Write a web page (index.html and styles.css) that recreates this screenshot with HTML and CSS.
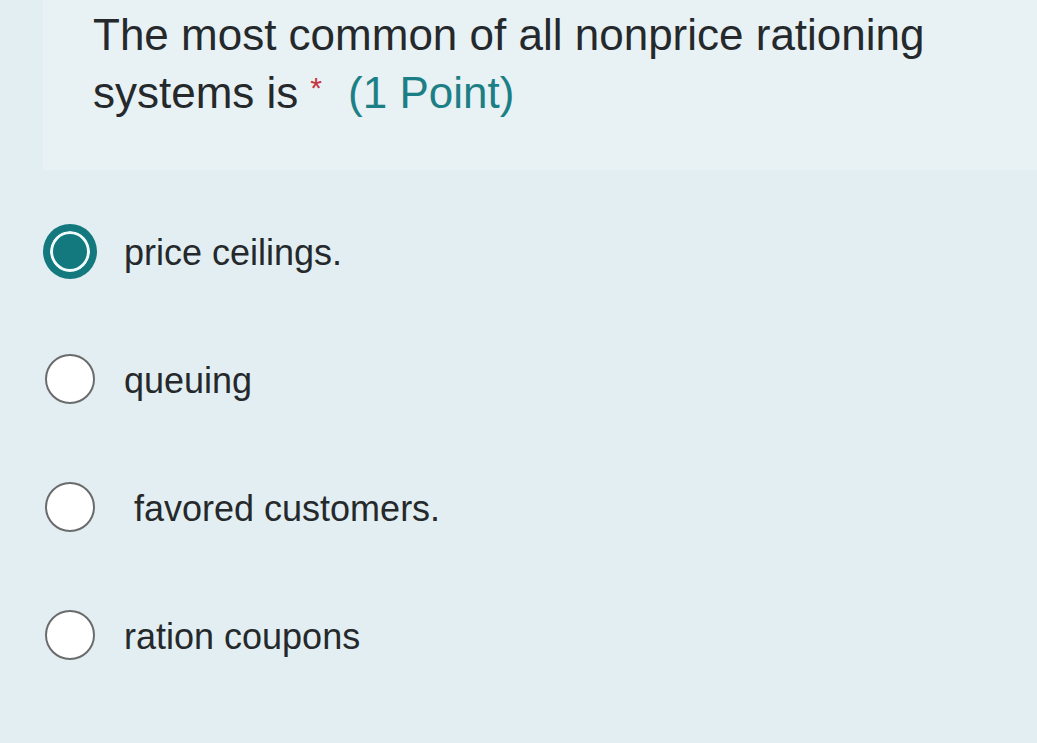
FILE: index.html
```html
<!DOCTYPE html>
<html lang="en">
<head>
<meta charset="utf-8">
<title>Question</title>
<link rel="stylesheet" href="styles.css">
</head>
<body>
  <div class="page">
    <div class="question">
      <div class="title">The most common of all nonprice rationing systems is<span class="req">*</span><span class="points">(1 Point)</span></div>
    </div>
    <div class="options">
      <div class="option">
        <span class="radio-cell"><span class="radio checked"></span></span>
        <span class="label">price ceilings.</span>
      </div>
      <div class="option">
        <span class="radio-cell"><span class="radio"></span></span>
        <span class="label">queuing</span>
      </div>
      <div class="option">
        <span class="radio-cell"><span class="radio"></span></span>
        <span class="label label-indent">favored customers.</span>
      </div>
      <div class="option">
        <span class="radio-cell"><span class="radio"></span></span>
        <span class="label">ration coupons</span>
      </div>
    </div>
  </div>
</body>
</html>
```

FILE: styles.css
```css
html, body {
  margin: 0;
  padding: 0;
}

body {
  background: #e2eef1;
  font-family: "Liberation Sans", Arial, sans-serif;
  color: #25292b;
}

.page {
  width: 1037px;
  height: 743px;
  overflow: hidden;
}

.question {
  margin-left: 43px;
  height: 170px;
  box-sizing: border-box;
  padding: 6px 0 0 50px;
  background: #e8f1f4;
}

.title {
  font-size: 44px;
  line-height: 58px;
  width: 860px;
}

.req {
  color: #c8333f;
  font-size: 30px;
  line-height: 0;
  vertical-align: 10px;
  margin-left: 12px;
  margin-right: 26px;
}

.points {
  color: #1c7f86;
}

.options {
  padding-top: 17px;
  display: flex;
  flex-direction: column;
}

.option {
  height: 128px;
  display: flex;
  align-items: center;
}

.radio-cell {
  width: 54px;
  height: 54px;
  margin-left: 43px;
  margin-right: 27px;
  display: flex;
  align-items: center;
  justify-content: center;
}

.radio {
  display: block;
  width: 50px;
  height: 50px;
  box-sizing: border-box;
  border-radius: 50%;
  border: 2.5px solid #6a6b6c;
  background: #ffffff;
}

.radio.checked {
  width: 55px;
  height: 55px;
  border: 7px solid #14797e;
  background: #14797e;
  box-shadow: inset 0 0 0 3px #f2fbfb;
}

.label {
  font-size: 36px;
  line-height: 44px;
  padding-top: 3px;
}

.label-indent {
  padding-left: 10px;
}
```
